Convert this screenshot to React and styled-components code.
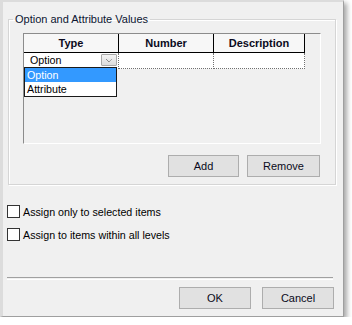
import React from "react";
import styled, { createGlobalStyle } from "styled-components";

const Global = createGlobalStyle`
  html, body { margin: 0; padding: 0; background: #ffffff; }
  body { font-family: "Liberation Sans", Arial, sans-serif; font-size: 10.7px; color: #000; }
`;

const Dialog = styled.div`
  box-sizing: border-box;
  width: 344px;
  height: 317px;
  background: #f0f0f0;
  border-left: 3px solid #dcdcdc;
  border-top: 2px solid #dcdcdc;
  border-right: 1px solid #9f9f9f;
  border-bottom: 1px solid #9f9f9f;
  box-shadow: 3px 3px 5px rgba(0, 0, 0, 0.35);
  padding: 11px 7px 0 4px;
  display: flex;
  flex-direction: column;
`;

const Group = styled.fieldset`
  margin: 0 0 0 1px;
  padding: 0 14px 7px 14px;
  border: 1px solid #d5d5d5;
  box-shadow: inset 1px 1px 0 #fff, 1px 1px 0 #fff;
  min-width: 0;
`;

const Legend = styled.legend`
  margin-left: -10px;
  padding: 0 2px;
  line-height: 13px;
  font-size: 11px;
  color: #0c1530;
`;

const Panel = styled.div`
  margin-top: 7px;
  height: 111px;
  box-sizing: border-box;
  border-left: 1px solid #8c8c8c;
  border-top: 1px solid #8c8c8c;
  border-right: 1px solid #ffffff;
  border-bottom: 1px solid #ffffff;
  background: #f0f0f0;
`;

const Grid = styled.div`
  display: grid;
  grid-template-columns: 95px 95px 91px;
  width: 281px;
`;

const HeadCell = styled.div`
  height: 18px;
  line-height: 18px;
  text-align: center;
  font-weight: bold;
  font-size: 11px;
  background: #f7f7f7;
  border-right: 1px solid #000;
  border-bottom: 1px solid #000;
  color: #0a0a20;
`;

const Cell = styled.div`
  position: relative;
  height: 15px;
  background: #fff;
  border-right: 1px dotted #707070;
  border-bottom: 1px dotted #707070;
  display: flex;
  align-items: center;
  padding-left: 6px;
`;

const CellText = styled.span`
  flex: 1;
  line-height: 15px;
`;

const ComboButton = styled.div`
  width: 14px;
  height: 10px;
  margin-right: 1px;
  margin-top: -1px;
  border: 1px solid #a8a8a8;
  border-radius: 1px;
  background: linear-gradient(#f4f4f4, #dcdcdc);
  display: flex;
  align-items: center;
  justify-content: center;
`;

const List = styled.div`
  position: absolute;
  left: 0;
  top: calc(100% - 1px);
  width: 93px;
  box-sizing: border-box;
  border: 1px solid #1a1a1a;
  background: #fff;
  z-index: 2;
`;

const Item = styled.div`
  height: 14px;
  line-height: 14px;
  padding-left: 2px;
  background: ${(p) => (p.$selected ? "#3399ff" : "#fff")};
  color: ${(p) => (p.$selected ? "#fff" : "#000")};
`;

const ButtonRow = styled.div`
  display: flex;
  justify-content: flex-end;
  gap: ${(p) => p.$gap}px;
  margin-top: ${(p) => p.$top}px;
  padding-right: ${(p) => p.$right}px;
`;

const Button = styled.button`
  box-sizing: border-box;
  width: ${(p) => p.$w}px;
  height: 22px;
  padding: 0;
  border: 1px solid #adadad;
  background: #e1e1e1;
  font-family: "Liberation Sans", Arial, sans-serif;
  font-size: 11px;
  color: #0a0a20;
`;

const Check = styled.label`
  display: flex;
  align-items: center;
  gap: 3px;
  height: 13px;
  margin-top: ${(p) => p.$top}px;
  color: #000;
`;

const Box = styled.span`
  box-sizing: border-box;
  width: 13px;
  height: 13px;
  border: 1px solid #333;
  background: #fff;
`;

const Separator = styled.div`
  margin: 36px 3px 0 0;
  height: 1px;
  border-top: 1px solid #a0a0a0;
  border-bottom: 1px solid #ffffff;
`;

const Chevron = () => (
  <svg width="8" height="5" viewBox="0 0 8 5">
    <path d="M1 1 L4 4 L7 1" fill="none" stroke="#666" strokeWidth="1" strokeDasharray="1 0.6" />
  </svg>
);

export default function App() {
  return (
    <>
      <Global />
      <Dialog>
        <Group>
          <Legend>Option and Attribute Values</Legend>
          <Panel>
            <Grid>
              <HeadCell>Type</HeadCell>
              <HeadCell>Number</HeadCell>
              <HeadCell>Description</HeadCell>
              <Cell>
                <CellText>Option</CellText>
                <ComboButton>
                  <Chevron />
                </ComboButton>
                <List>
                  <Item $selected>Option</Item>
                  <Item>Attribute</Item>
                </List>
              </Cell>
              <Cell />
              <Cell />
            </Grid>
          </Panel>
          <ButtonRow $gap={8} $top={11} $right={1}>
            <Button $w={71}>Add</Button>
            <Button $w={73}>Remove</Button>
          </ButtonRow>
        </Group>
        <Check $top={20}>
          <Box />
          Assign only to selected items
        </Check>
        <Check $top={10}>
          <Box />
          Assign to items within all levels
        </Check>
        <Separator />
        <ButtonRow $gap={11} $top={7} $right={2}>
          <Button $w={72}>OK</Button>
          <Button $w={72}>Cancel</Button>
        </ButtonRow>
      </Dialog>
    </>
  );
}
